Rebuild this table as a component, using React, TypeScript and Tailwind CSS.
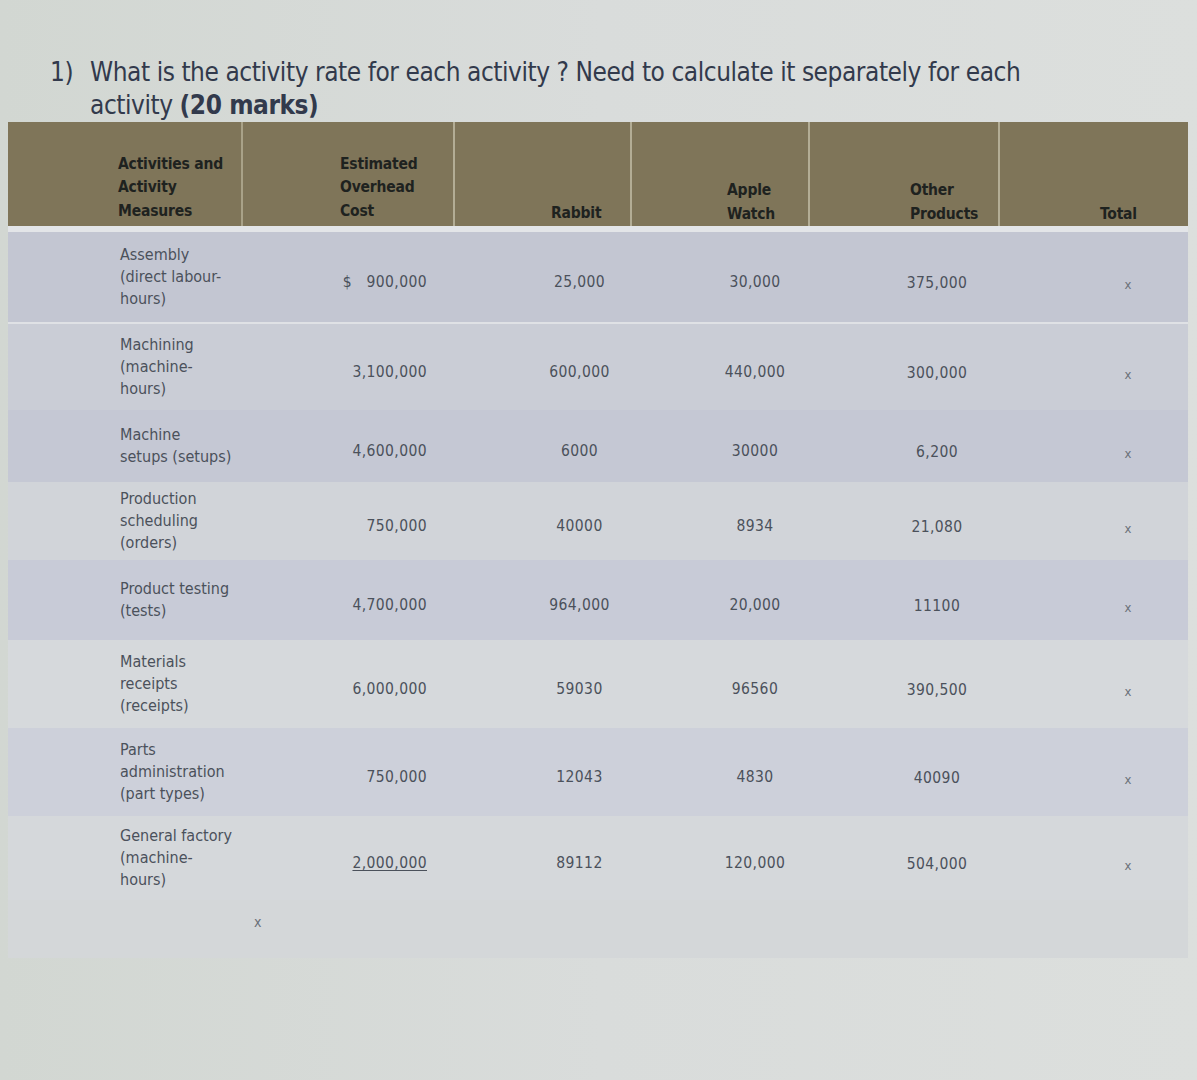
import React from "react";

type Row = {
  label: string[];
  cost: string;
  rabbit: string;
  apple: string;
  other: string;
  bg: string;
  h: string;
  underline?: boolean;
};

const rows: Row[] = [
  { label: ["Assembly", "(direct labour-", "hours)"], cost: "$\u00a0\u00a0\u00a0900,000", rabbit: "25,000", apple: "30,000", other: "375,000", bg: "bg-[#c3c6d2]", h: "h-[92px]" },
  { label: ["Machining", "(machine-", "hours)"], cost: "3,100,000", rabbit: "600,000", apple: "440,000", other: "300,000", bg: "bg-[#cacdd6]", h: "h-[86px]" },
  { label: ["Machine", "setups (setups)"], cost: "4,600,000", rabbit: "6000", apple: "30000", other: "6,200", bg: "bg-[#c5c8d4]", h: "h-[72px]" },
  { label: ["Production", "scheduling", "(orders)"], cost: "750,000", rabbit: "40000", apple: "8934", other: "21,080", bg: "bg-[#d1d4d9]", h: "h-[78px]" },
  { label: ["Product testing", "(tests)"], cost: "4,700,000", rabbit: "964,000", apple: "20,000", other: "11100", bg: "bg-[#c8cbd7]", h: "h-[80px]" },
  { label: ["Materials", "receipts", "(receipts)"], cost: "6,000,000", rabbit: "59030", apple: "96560", other: "390,500", bg: "bg-[#d6d9dc]", h: "h-[88px]" },
  { label: ["Parts", "administration", "(part types)"], cost: "750,000", rabbit: "12043", apple: "4830", other: "40090", bg: "bg-[#cdd0da]", h: "h-[88px]" },
  { label: ["General factory", "(machine-", "hours)"], cost: "2,000,000", rabbit: "89112", apple: "120,000", other: "504,000", bg: "bg-[#d5d8db]", h: "h-[84px]", underline: true },
];

const grid = "grid grid-cols-[235px_212px_177px_178px_190px_188px]";

export default function App() {
  return (
    <div className="relative w-[1197px] h-[1080px] overflow-hidden bg-gradient-to-r from-[#d2d7d2] via-[#d9dcdb] to-[#dcdfdd] font-['Liberation_Sans_Narrow','DejaVu_Sans_Condensed','Lato',sans-serif]">
      {/* title */}
      <div className="flex pt-[56px] pl-[50px] text-[#323a4c] text-[26px] leading-[33px] tracking-[-0.45px]">
        <div className="w-[40px] shrink-0">1)</div>
        <div className="w-[960px]">
          <div>What is the activity rate for each activity ? Need to calculate it separately for each</div>
          <div>
            activity <span className="font-bold">(20 marks)</span>
          </div>
        </div>
      </div>

      {/* table */}
      <div className="ml-[8px] w-[1180px]">
        {/* header */}
        <div className={`${grid} h-[104px] bg-[#7f7559] text-[#1e221f] text-[15.5px] leading-[23.5px] font-bold tracking-[-0.2px]`}>
          <div className="flex items-end pl-[110px] pb-[3px] border-r-2 border-[#a9a288]">
            <div>Activities and<br />Activity<br />Measures</div>
          </div>
          <div className="flex items-end pl-[97px] pb-[3px] border-r-2 border-[#b3ad95]">
            <div>Estimated<br />Overhead<br />Cost</div>
          </div>
          <div className="flex items-end pl-[96px] pb-[1px] border-r-2 border-[#b3ad95]">
            <div>Rabbit</div>
          </div>
          <div className="flex items-end pl-[95px] pb-[0px] border-r-2 border-[#b3ad95]">
            <div>Apple<br />Watch</div>
          </div>
          <div className="flex items-end pl-[100px] pb-[0px] border-r-2 border-[#b3ad95]">
            <div>Other<br />Products</div>
          </div>
          <div className="flex items-end pl-[100px] pb-[0px]">
            <div>Total</div>
          </div>
        </div>

        <div className="h-[6px] bg-[#e3e5e8]" />

        {/* body rows */}
        <div className="text-[#4b515b] text-[15.5px]">
          {rows.map((r, i) => (
            <div key={i} className={`${grid} ${r.h} ${r.bg} ${i === 0 ? "border-b-2 border-[#dfe1e5]" : ""}`}>
              <div className="flex items-center pl-[112px] leading-[22px] text-[16px]">
                <div>
                  {r.label.map((l, j) => (
                    <div key={j} className="whitespace-nowrap">{l}</div>
                  ))}
                </div>
              </div>
              <div className="flex items-center justify-end pr-[28px] pt-[12px] tracking-[0.4px]">
                <span className={r.underline ? "underline underline-offset-2" : ""}>{r.cost}</span>
              </div>
              <div className="flex items-center justify-center pl-[72px] pt-[12px] tracking-[0.4px]">{r.rabbit}</div>
              <div className="flex items-center justify-center pl-[68px] pt-[12px] tracking-[0.4px]">{r.apple}</div>
              <div className="flex items-center justify-center pl-[64px] pt-[14px] tracking-[0.4px]">{r.other}</div>
              <div className="flex items-center justify-center pl-[68px] pt-[16px] text-[13px] text-[#6b7078]">x</div>
            </div>
          ))}
          <div className={`${grid} h-[58px] bg-[#d4d7d9]`}>
            <div />
            <div className="pl-[11px] pt-[12px] text-[14px] text-[#6b7078]">x</div>
            <div />
            <div />
            <div />
            <div />
          </div>
        </div>
      </div>
    </div>
  );
}
